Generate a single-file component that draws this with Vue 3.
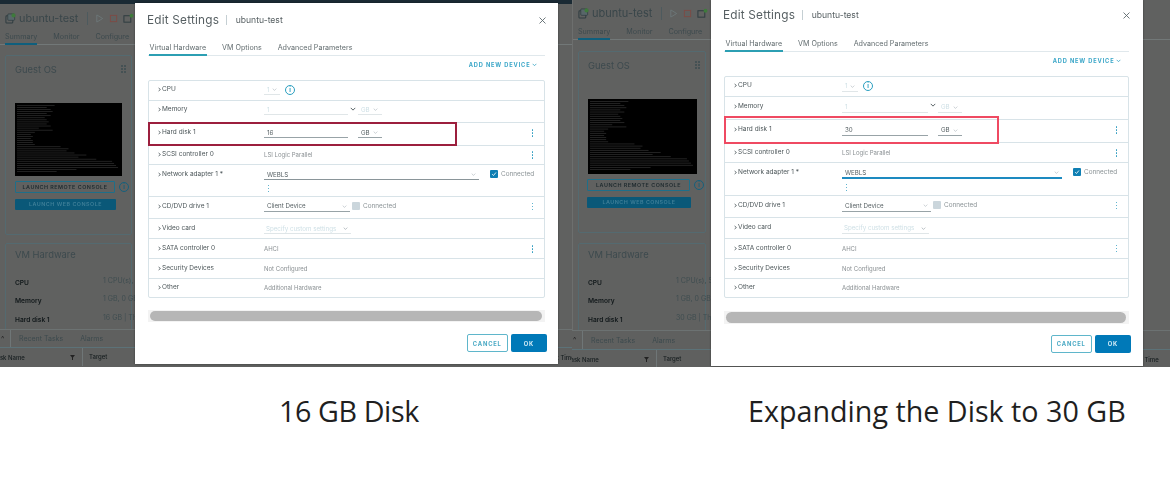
<script setup>
const consoleLines = [38,30,34,36,30,34,28,30,32,30,34,22,36,18,14,16,14,16,16,18,44,52,50,58,70,62,80,96,98,100,102,60,40]
const makeRows = (h, p) => [
  { key: 'cpu', label: 'CPU', kind: 'cpu', h: h[0], pad: p[0] },
  { key: 'mem', label: 'Memory', kind: 'memory', h: h[1], pad: p[1] },
  { key: 'hd', label: 'Hard disk 1', kind: 'disk', h: h[2], pad: p[2], kebab: true },
  { key: 'scsi', label: 'SCSI controller 0', kind: 'text', text: 'LSI Logic Parallel', h: h[3], pad: p[3], kebab: true },
  { key: 'net', label: 'Network adapter 1 *', kind: 'net', h: h[4], pad: p[4] },
  { key: 'cd', label: 'CD/DVD drive 1', kind: 'cd', h: h[5], pad: p[5], kebab: true },
  { key: 'video', label: 'Video card', kind: 'video', h: h[6], pad: p[6] },
  { key: 'sata', label: 'SATA controller 0', kind: 'text', text: 'AHCI', h: h[7], pad: p[7], kebab: true },
  { key: 'sec', label: 'Security Devices', kind: 'text', text: 'Not Configured', h: h[8], pad: p[8] },
  { key: 'other', label: 'Other', kind: 'text', text: 'Additional Hardware', h: h[9], pad: p[9] }
]
const shots = [
  { id: 'a', disk: '16', caption: '16 GB Disk', summary: '16 GB | Thin', memory: '1 GB, 0 GB', cpu: '1 CPU(s), 8',
    rows: makeRows([19.5, 22.5, 23, 19, 32, 22, 20, 20, 19.5, 18], [4, 4.5, 5, 4, 5, 4.5, 5, 5, 5, 4.5]) },
  { id: 'b', disk: '30', caption: 'Expanding the Disk to 30 GB', summary: '30 GB | Thin', memory: '1 GB, 0 GB', cpu: '1 CPU(s), 5',
    rows: makeRows([20, 23, 23, 20, 32.5, 22.5, 21, 20, 19.5, 18.5], [4, 5, 5, 5, 5, 5, 5, 4.5, 5, 4.5]) }
]
</script>

<template>
  <div class="page">
    <div class="shots">
      <section v-for="shot in shots" :key="shot.id" class="shot" :class="'shot-' + shot.id">
        <div class="topbar"></div>
        <div class="app">
          <header class="app-head">
            <svg class="vm-icon" viewBox="0 0 12 12" width="11" height="11">
              <rect x="1" y="3" width="7.5" height="8" rx="1" fill="none" stroke="#2f3c40" stroke-width="1.1" />
              <rect x="3" y="1" width="7.5" height="7" rx="1" fill="#586669" stroke="#2f3c40" stroke-width="0.8" />
              <circle cx="9.3" cy="2.6" r="2.2" fill="#3e7a3b" />
            </svg>
            <span class="vm-name">ubuntu-test</span>
            <i class="head-sep"></i>
            <svg class="act" viewBox="0 0 10 10" width="9" height="9"><path d="M2 1 L8.5 5 L2 9 Z" fill="none" stroke="#6e7a7c" stroke-width="0.9" /></svg>
            <svg class="act" viewBox="0 0 10 10" width="9" height="9"><rect x="1.5" y="1.5" width="7" height="7" fill="none" stroke="#7d4a44" stroke-width="1" /></svg>
            <svg class="act" viewBox="0 0 12 12" width="11" height="11"><rect x="1" y="3" width="7.5" height="7" fill="none" stroke="#2f3c40" stroke-width="1.1" /><circle cx="9.3" cy="3" r="2.1" fill="#3e7a3b" /></svg>
          </header>
          <nav class="app-tabs">
            <span class="app-tab on">Summary</span>
            <span class="app-tab">Monitor</span>
            <span class="app-tab">Configure</span>
          </nav>
          <div class="cards">
            <article class="card guest">
              <div class="card-top">
                <h3>Guest OS</h3>
                <svg class="grip" viewBox="0 0 5 8" width="5" height="8"><path d="M0 0h2v2H0zM3 0h2v2H3zM0 3h2v2H0zM3 3h2v2H3zM0 6h2v2H0zM3 6h2v2H3z" fill="#455154" /></svg>
              </div>
              <svg class="console" viewBox="0 0 108 74" preserveAspectRatio="none">
                <rect width="108" height="74" fill="#000" />
                <rect v-for="(w, i) in consoleLines" :key="i" x="2" :y="2 + i * 2.1" :width="w" height="0.7" fill="#303030" />
              </svg>
              <div class="console-row">
                <button class="btn-outline">LAUNCH REMOTE CONSOLE</button>
                <span class="info dark">i</span>
              </div>
              <button class="btn-solid">LAUNCH WEB CONSOLE</button>
            </article>
            <article class="card hardware">
              <h3>VM Hardware</h3>
              <dl class="hw">
                <dt>CPU</dt><dd>{{ shot.cpu }}</dd>
                <dt>Memory</dt><dd>{{ shot.memory }}</dd>
                <dt>Hard disk 1</dt><dd>{{ shot.summary }}</dd>
              </dl>
            </article>
          </div>
        </div>
        <footer class="tasks">
          <div class="tasks-tabs">
            <span class="caret">^</span>
            <span class="task-tab">Recent Tasks</span>
            <span class="task-tab">Alarms</span>
          </div>
          <div class="tasks-cols">
            <span class="task-name">Task Name</span>
            <svg class="filter" viewBox="0 0 6 6" width="5" height="5"><path d="M0 0H6L3.6 3V6H2.4V3Z" fill="#222" /></svg>
            <span class="task-target">Target</span>
            <span class="task-time">Start Time</span>
          </div>
        </footer>

        <div class="dialog">
          <div class="dlg-head">
            <span class="dlg-title">Edit Settings</span>
            <i class="dlg-sep"></i>
            <span class="dlg-sub">ubuntu-test</span>
            <svg class="close" viewBox="0 0 8 8" width="7" height="7"><path d="M.6.6 7.4 7.4M7.4.6.6 7.4" stroke="#59666a" stroke-width="1" fill="none" /></svg>
          </div>
          <div class="dlg-tabs">
            <span class="dlg-tab on">Virtual Hardware</span>
            <span class="dlg-tab">VM Options</span>
            <span class="dlg-tab">Advanced Parameters</span>
          </div>
          <div class="add-row">
            <span class="add">ADD NEW DEVICE</span>
            <svg viewBox="0 0 8 5" width="5" height="3.5"><path d="M1 1 4 4 7 1" stroke="#2b9fc0" stroke-width="1.2" fill="none" /></svg>
          </div>
          <div class="hw-table">
            <div v-for="row in shot.rows" :key="row.key" class="hw-row" :style="{ height: row.h + 'px', paddingTop: row.pad + 'px' }">
              <div class="hw-label">
                <svg viewBox="0 0 5 7" width="3" height="5" class="chev"><path d="M1 1 4 3.5 1 6" stroke="#3f4b4e" stroke-width="1.3" fill="none" /></svg>
                <span>{{ row.label }}</span>
              </div>
              <div class="hw-value">
                <template v-if="row.kind === 'cpu'">
                  <span class="sel sel-cpu faint">1<svg viewBox="0 0 8 5" width="5" height="3"><path d="M1 1 4 4 7 1" stroke="#a9b4b8" fill="none" /></svg></span>
                  <span class="info">i</span>
                </template>
                <template v-else-if="row.kind === 'memory'">
                  <span class="inp faint">1</span>
                  <svg class="mem-chev" viewBox="0 0 8 5" width="6" height="4"><path d="M1 1 4 4 7 1" stroke="#4a5558" stroke-width="1.2" fill="none" /></svg>
                  <span class="sel sel-unit faint">GB<svg viewBox="0 0 8 5" width="5" height="3"><path d="M1 1 4 4 7 1" stroke="#a9b4b8" fill="none" /></svg></span>
                </template>
                <template v-else-if="row.kind === 'disk'">
                  <span class="inp solid">{{ shot.disk }}</span>
                  <span class="sel sel-unit">GB<svg viewBox="0 0 8 5" width="5" height="3"><path d="M1 1 4 4 7 1" stroke="#a9b4b8" fill="none" /></svg></span>
                </template>
                <template v-else-if="row.kind === 'net'">
                  <div class="net-col">
                    <div class="net-top">
                      <span class="sel sel-net">WEBLS<svg viewBox="0 0 8 5" width="5" height="3"><path d="M1 1 4 4 7 1" stroke="#a9b4b8" fill="none" /></svg></span>
                      <span class="check on"><svg viewBox="0 0 8 8" width="6" height="6"><path d="M1.5 4.2 3.3 6 6.6 2" stroke="#fff" stroke-width="1.1" fill="none" /></svg></span>
                      <span class="conn">Connected</span>
                    </div>
                    <span class="kebab inline"><i></i><i></i><i></i></span>
                  </div>
                </template>
                <template v-else-if="row.kind === 'cd'">
                  <span class="sel sel-cd">Client Device<svg viewBox="0 0 8 5" width="5" height="3"><path d="M1 1 4 4 7 1" stroke="#a9b4b8" fill="none" /></svg></span>
                  <span class="check"></span>
                  <span class="conn">Connected</span>
                </template>
                <template v-else-if="row.kind === 'video'">
                  <span class="sel sel-video faint">Specify custom settings<svg viewBox="0 0 8 5" width="5" height="3"><path d="M1 1 4 4 7 1" stroke="#8d999d" fill="none" /></svg></span>
                </template>
                <span v-else class="plain">{{ row.text }}</span>
              </div>
              <div class="hw-end">
                <span v-if="row.kebab" class="kebab"><i></i><i></i><i></i></span>
              </div>
              <div v-if="row.key === 'hd'" class="highlight"></div>
            </div>
          </div>
          <div class="scroll"><div class="thumb"></div></div>
          <div class="dlg-foot">
            <button class="dlg-cancel">CANCEL</button>
            <button class="dlg-ok">OK</button>
          </div>
        </div>
      </section>
    </div>
    <div class="captions">
      <p v-for="shot in shots" :key="shot.id" class="caption" :class="'cap-' + shot.id">{{ shot.caption }}</p>
    </div>
  </div>
</template>

<style scoped>
.page { width: 1170px; height: 477px; background: #fff; display: flex; flex-direction: column; font-family: Inter, "Liberation Sans", sans-serif; overflow: hidden; }
.shots { display: flex; height: 367px; flex: none; }
.shot { position: relative; height: 367px; background: #606160; overflow: hidden; display: flex; flex-direction: column; filter: blur(0.35px); }
.shot-a { width: 572px; --pad: 5px; --dl: 135px; --dt: 3px; --dw: 423px; --dh: 361px; --head: 34px; --headgap: 4px; --col: 115px; --addh: 24px; --scrollgap: 12px; --footgap: 12px; --input: 84px; --ugap: 10px; --net: 215px; --cd: 86px; --hlw: 309px; --hlh: 23.5px; --hlt: -1px; --hlc: #9c1f3d; --netline: #8a9599; --cardh: 180px; --cardgap: 8px; --cardw: 127px; --cw: 107px; --ch: 73px; --bw: 100px; --inph: 10px; --apptop: 4px; --cardtop: 10px; --tasks: 38px; --tabh: 17px; --vmfont: 10.8px; }
.shot-b { width: 598px; --pad: 5px; --dl: 139px; --dt: 0px; --dw: 432px; --dh: 366px; --head: 30px; --headgap: 6.5px; --col: 117px; --addh: 24.5px; --scrollgap: 13px; --footgap: 11px; --input: 86px; --ugap: 10px; --net: 220px; --cd: 89px; --hlw: 275px; --hlh: 28px; --hlt: -4px; --hlc: #ef4a62; --netline: #1d8ac0; --cardh: 182px; --cardgap: 10px; --cardw: 128px; --cw: 109px; --ch: 75px; --bw: 103px; --inph: 11px; --apptop: 3px; --cardtop: 11px; --tasks: 37px; --tabh: 18px; --vmfont: 11px; }
.topbar { height: 4px; flex: none; background: #1a2a34; }
.shot-b .topbar { height: 0; }
.app { flex: 1; min-height: 0; overflow: hidden; padding-top: var(--apptop); }
.shot-b .app { border-left: 1px solid #6d6f6e; }
.app-head { display: flex; align-items: center; height: 20px; padding-left: var(--pad); }
.vm-name { font-size: var(--vmfont); color: #39464a; margin-left: 3px; }
.head-sep { width: 1px; height: 13px; background: #4d5a5e; margin: 0 7px 0 9px; }
.act { margin-right: 5px; flex: none; }
.app-tabs { display: flex; gap: 16px; height: 16px; align-items: center; padding-left: var(--pad); border-bottom: 1px solid #727878; box-sizing: border-box; margin-top: 1px; }
.app-tab { font-size: 7.2px; color: #3d4a4e; position: relative; line-height: 16px; }
.app-tab.on::after { content: ""; position: absolute; left: 0; right: 0; bottom: 0; height: 1.5px; background: #0f5f7d; }
.cards { padding: var(--cardtop) 0 0 var(--pad); }
.card { border: 1px solid #546a70; border-radius: 2px; box-sizing: border-box; width: var(--cardw); padding: 0 9px; }
.guest { height: var(--cardh); margin-bottom: var(--cardgap); }
.card-top { display: flex; justify-content: space-between; align-items: center; padding-top: 7px; height: 12px; }
.grip { margin-right: -4px; }
h3 { margin: 0; font-size: 9.4px; font-weight: 400; color: #3d4a4e; }
.console { display: block; width: var(--cw); height: var(--ch); margin-top: 28px; }
.console-row { display: flex; align-items: center; gap: 4px; margin-top: 5px; }
.btn-outline { width: var(--bw); height: 11.5px; padding: 0; background: transparent; border: 1px solid #1e6f8a; border-radius: 1px; color: #1e2a2e; font: 600 5.4px Inter, sans-serif; letter-spacing: 0.5px; box-sizing: border-box; flex: none; }
.btn-solid { display: block; width: calc(var(--bw) + 1px); height: 11.5px; margin-top: 6px; padding: 0; border: 0; border-radius: 1px; background: #0a5878; color: #3f7f98; font: 600 5.4px Inter, sans-serif; letter-spacing: 0.5px; }
.shot-b .console-row, .shot-b .btn-solid { margin-left: -1px; }
.info { width: 8px; height: 8px; border-radius: 50%; border: 1px solid #2b9fc0; color: #2b9fc0; font: 700 6px/8px Inter, sans-serif; text-align: center; display: inline-block; box-sizing: content-box; flex: none; }
.info.dark { border-color: #15607d; color: #15607d; }
.hardware { height: 140px; }
.hardware h3 { padding-top: 5px; }
.hw { display: grid; grid-template-columns: 88px auto; margin: 14px 0 0; }
.hw dt { font-size: 6.6px; font-weight: 600; color: #11181a; height: 18.4px; line-height: 18.4px; }
.hw dd { margin: 0; font-size: 7px; color: #3f4d50; white-space: nowrap; height: 18.4px; line-height: 14px; }
.tasks { flex: none; height: var(--tasks); border-top: 1px solid #6c7272; background: #5f605f; box-sizing: border-box; }
.tasks-tabs { display: flex; align-items: center; height: var(--tabh); border-bottom: 1px solid #5c7278; }
.caret { font-size: 7px; color: #222; width: 11px; padding-left: 1px; box-sizing: border-box; height: var(--tabh); line-height: var(--tabh); border-right: 1px solid #6f7677; }
.task-tab { font-size: 7px; color: #3d4a4e; margin-left: 8px; margin-right: 9px; }
.tasks-cols { display: flex; align-items: center; height: 18px; font-size: 6px; font-weight: 500; color: #161d1f; position: relative; }
.shot-b .tasks-cols { padding-left: 2px; }
.task-name { width: 77px; margin-left: -7px; flex: none; white-space: nowrap; }
.filter { flex: none; margin-right: 7px; }
.task-target { flex: none; height: 18px; line-height: 18px; border-left: 1px solid #6f7677; padding-left: 6px; }
.task-time { position: absolute; left: 545px; white-space: nowrap; }
.shot-b .task-time { left: 557px; }

.dialog { position: absolute; left: var(--dl); top: var(--dt); width: var(--dw); height: var(--dh); background: #fff; box-sizing: border-box; padding: 0 13px; box-shadow: 0 0 2px rgba(0,0,0,.4); }
.shot-b .dialog { padding-right: 14px; }
.dlg-head { display: flex; align-items: center; height: var(--head); margin-bottom: var(--headgap); margin-left: -1px; }
.dlg-title { font-size: 11.8px; color: #565f62; letter-spacing: 0.2px; }
.dlg-sep { width: 1px; height: 10px; background: #c5cfd3; margin: 0 8.5px 0 7px; }
.dlg-sub { font-size: 8.6px; color: #565f62; }
.close { margin-left: auto; margin-right: -1px; }
.dlg-tabs { display: flex; gap: 16px; height: 15px; box-sizing: border-box; border-bottom: 1px solid #e0e8ec; padding-left: 1.5px; }
.dlg-tab { font-size: 7.15px; color: #626c6f; position: relative; line-height: 13px; height: 15px; white-space: nowrap; }
.dlg-tab.on::after { content: ""; position: absolute; left: -1px; right: -1px; bottom: 0; height: 2px; background: #2c9fb3; }
.add-row { height: var(--addh); display: flex; justify-content: flex-end; gap: 1.5px; align-items: flex-start; padding: 5px 8px 0 0; box-sizing: border-box; line-height: 7px; }
.add-row svg { margin-top: 2px; }
.add { font-size: 5.7px; font-weight: 700; color: #3aa6c8; letter-spacing: 0.85px; }
.hw-table { border: 1px solid #d8e3e8; border-radius: 2px; }
.hw-row { display: grid; grid-template-columns: var(--col) 1fr 24px; box-sizing: border-box; position: relative; border-bottom: 1px solid #d8e3e8; }
.hw-row:last-child { border-bottom: 0; }
.hw-label { font-size: 6.5px; color: #4b5558; display: flex; align-items: flex-start; white-space: nowrap; padding-left: 8.5px; line-height: 8px; }
.chev { margin: 2px 1.5px 0 0; flex: none; }
.hw-value { display: flex; align-items: flex-start; font-size: 6.2px; color: #737b7e; line-height: 8px; }
.hw-end { display: flex; justify-content: center; padding-left: 1px; }
.inp, .sel { display: flex; align-items: center; justify-content: space-between; box-sizing: border-box; height: var(--inph); border-bottom: 1px solid #98a3a7; padding: 0 3px; flex: none; color: #555f62; }
.inp { width: var(--input); }
.inp.faint, .sel.faint { color: #cfe0e6; border-bottom-color: #e0e6e8; }
.mem-chev { position: absolute; left: calc(var(--col) + var(--input) + 2px); top: 6px; }
.sel-cpu { width: 16px; }
.sel-cpu + .info { margin-left: 5px; }
.sel-unit { width: 24px; margin-left: var(--ugap); padding-right: 4px; }
.sel-net { width: var(--net); border-bottom-color: var(--netline); padding-right: 3px; }
.shot-b .sel-net { border-bottom-width: 2px; }
.sel-cd { width: var(--cd); }
.sel-video { width: 87px; color: #d2dfe4; padding-left: 2px; }
.net-col { display: flex; flex-direction: column; }
.net-top { display: flex; align-items: flex-start; }
.check { width: 8px; height: 8px; border-radius: 1px; background: #cbd6dc; margin-left: 2px; flex: none; display: flex; align-items: center; justify-content: center; }
.check.on { background: #0f7fb3; margin-left: 11px; }
.conn { margin-left: 3px; color: #8b9396; font-size: 6.4px; }
.plain { color: #8a9093; font-size: 6px; margin-top: 1px; }
.kebab { display: inline-flex; flex-direction: column; gap: 1.5px; padding-top: 1px; }
.kebab i { width: 1.6px; height: 1.6px; border-radius: 50%; background: #2e9cc0; display: block; }
.kebab.inline { margin: 3.5px 0 0 3.5px; }
.highlight { position: absolute; left: -1px; top: var(--hlt); width: var(--hlw); height: var(--hlh); border: 2px solid var(--hlc); box-sizing: border-box; }
.scroll { margin-top: var(--scrollgap); height: 12.5px; background: #f3f3f3; padding: 1px 3px 1px 2px; box-sizing: border-box; }
.thumb { height: 100%; background: #b6b6b6; border-radius: 6px; }
.dlg-foot { display: flex; justify-content: flex-end; gap: 3px; margin-top: var(--footgap); margin-right: -1.5px; }
.dlg-foot button { height: 18px; padding: 0; font: 700 5.8px Inter, sans-serif; letter-spacing: 0.8px; border-radius: 2px; box-sizing: border-box; }
.dlg-cancel { width: 41.5px; background: #fff; border: 1px solid #5fb6cb; color: #49a9c4; }
.dlg-ok { width: 35.5px; background: #0079b8; border: 0; color: #d8eef7; }

.captions { flex: 1; display: flex; }
.caption { margin: 0; padding-top: 26px; font-family: "Open Sans", "Liberation Sans", sans-serif; font-size: 28.7px; line-height: 36px; color: #1f1f1f; white-space: nowrap; }
.cap-a { margin-left: 279px; width: 469px; letter-spacing: -0.4px; }
</style>
